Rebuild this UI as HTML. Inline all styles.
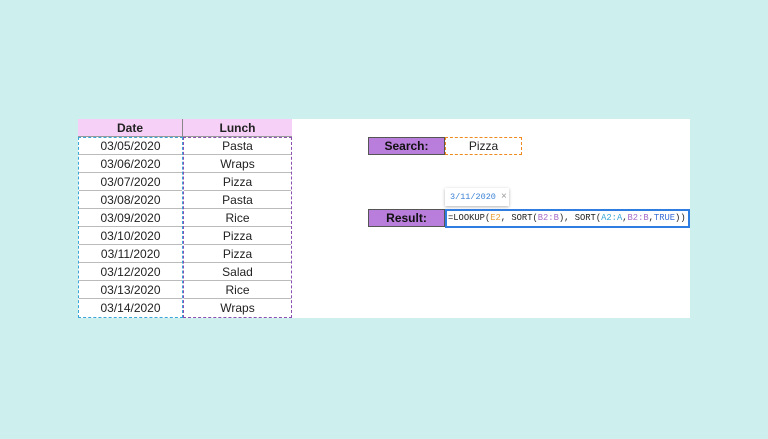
<!DOCTYPE html>
<html><head><style>
body{margin:0;width:768px;height:439px;background:#cdf0ee;position:relative;font-family:"Liberation Sans",sans-serif;overflow:hidden}
.panel{position:absolute;left:78px;top:119px;width:612px;height:199px;background:#fff}
.c{position:absolute;height:18px;line-height:18px;text-align:center;font-size:12px;color:#222;box-sizing:border-box}
.h{background:#f6d0f6;font-weight:bold;border-bottom:1px solid #999}
.row{border-bottom:1px solid #bbb}
.lab{position:absolute;background:#b97ddb;border:1px solid #555;box-sizing:border-box;font-weight:bold;font-size:12px;text-align:center;line-height:16px;color:#111}
</style></head><body>
<div class="panel"></div>
<div class="c h" style="left:78px;top:119px;width:105px;border-right:1px solid #888">Date</div>
<div class="c h" style="left:183px;top:119px;width:109px">Lunch</div>
<div class="c row" style="left:79px;top:137px;width:103px">03/05/2020</div><div class="c row" style="left:184px;top:137px;width:107px">Pasta</div>
<div class="c row" style="left:79px;top:155px;width:103px">03/06/2020</div><div class="c row" style="left:184px;top:155px;width:107px">Wraps</div>
<div class="c row" style="left:79px;top:173px;width:103px">03/07/2020</div><div class="c row" style="left:184px;top:173px;width:107px">Pizza</div>
<div class="c row" style="left:79px;top:191px;width:103px">03/08/2020</div><div class="c row" style="left:184px;top:191px;width:107px">Pasta</div>
<div class="c row" style="left:79px;top:209px;width:103px">03/09/2020</div><div class="c row" style="left:184px;top:209px;width:107px">Rice</div>
<div class="c row" style="left:79px;top:227px;width:103px">03/10/2020</div><div class="c row" style="left:184px;top:227px;width:107px">Pizza</div>
<div class="c row" style="left:79px;top:245px;width:103px">03/11/2020</div><div class="c row" style="left:184px;top:245px;width:107px">Pizza</div>
<div class="c row" style="left:79px;top:263px;width:103px">03/12/2020</div><div class="c row" style="left:184px;top:263px;width:107px">Salad</div>
<div class="c row" style="left:79px;top:281px;width:103px">03/13/2020</div><div class="c row" style="left:184px;top:281px;width:107px">Rice</div>
<div class="c" style="left:79px;top:299px;width:103px">03/14/2020</div><div class="c" style="left:184px;top:299px;width:107px">Wraps</div>
<div style="position:absolute;left:78px;top:137px;width:105px;height:181px;border:1px dashed #3aa6d8;box-sizing:border-box"></div>
<div style="position:absolute;left:183px;top:137px;width:109px;height:181px;border:1px dashed #8a4fb0;box-sizing:border-box"></div>

<div class="lab" style="left:368px;top:137px;width:77px;height:18px">Search:</div>
<div style="position:absolute;left:445px;top:137px;width:77px;height:18px;border:1px dashed #f08a1e;box-sizing:border-box;text-align:center;font-size:12px;line-height:16px;color:#222">Pizza</div>

<div style="position:absolute;left:445px;top:188px;width:64px;height:18px;background:#fff;box-shadow:0 1px 3px rgba(0,0,0,.3);font-family:'Liberation Mono',monospace;font-size:8.5px;line-height:18px;color:#3b82d6;padding-left:5px;box-sizing:border-box;white-space:nowrap">3/11/2020 <span style="color:#999;font-family:'Liberation Sans',sans-serif;font-size:10px">×</span></div>

<div class="lab" style="left:368px;top:209px;width:77px;height:18px">Result:</div>
<div style="position:absolute;left:445px;top:209px;width:245px;height:19px;border:2px solid #2f7de0;box-sizing:border-box;font-family:'Liberation Mono',monospace;font-size:8.8px;line-height:15px;padding-left:1px;color:#222;white-space:nowrap;overflow:hidden">=LOOKUP(<span style="color:#e8a23a">E2</span>, SORT(<span style="color:#a66dc9">B2:B</span>), SORT(<span style="color:#3aa6d8">A2:A</span>,<span style="color:#a66dc9">B2:B</span>,<span style="color:#3b6fd6">TRUE</span>))</div>
</body></html>
